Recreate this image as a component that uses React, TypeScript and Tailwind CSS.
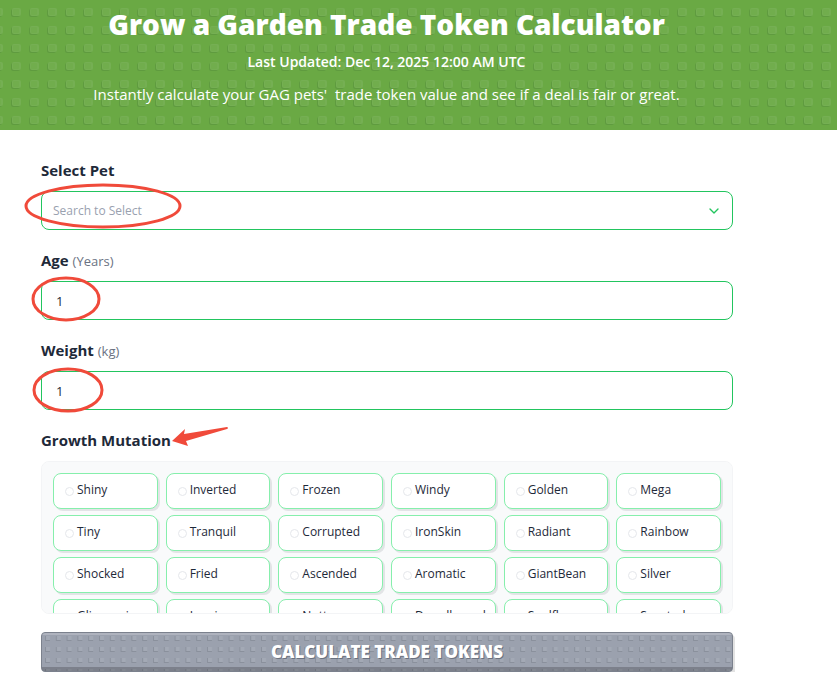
import { ChevronDown } from "lucide-react";

const mutations = [
  "Shiny", "Inverted", "Frozen", "Windy", "Golden", "Mega",
  "Tiny", "Tranquil", "Corrupted", "IronSkin", "Radiant", "Rainbow",
  "Shocked", "Fried", "Ascended", "Aromatic", "GiantBean", "Silver",
  "Glimmering", "Luminous", "Nutty", "Dreadbound", "Soulflame", "Spectral",
];

function HeaderStuds() {
  return (
    <svg className="absolute inset-0 h-full w-full" aria-hidden="true">
      <defs>
        <pattern id="studs" width="18" height="18" patternUnits="userSpaceOnUse" x="-7" y="7">
          <rect x="0" y="2" width="9" height="8" rx="2" fill="#5f9b3f" />
          <rect x="1" y="1" width="9" height="8" rx="2" fill="#75af53" />
          <rect x="2" y="2" width="6" height="6" rx="1" fill="#71ad4d" />
        </pattern>
      </defs>
      <rect width="100%" height="100%" fill="url(#studs)" />
    </svg>
  );
}

function ButtonStuds() {
  return (
    <svg className="absolute inset-0 h-full w-full" aria-hidden="true">
      <defs>
        <pattern id="button-studs" width="10.8" height="11" patternUnits="userSpaceOnUse" x="2" y="2">
          <rect x="1" y="1" width="5" height="5" fill="#a3a9b5" />
          <path d="M1.5 1v4.5h4.5" fill="none" stroke="#8a909c" />
        </pattern>
      </defs>
      <rect width="100%" height="100%" fill="url(#button-studs)" />
    </svg>
  );
}

type NumberFieldProps = {
  id: string;
  label: string;
  unit: string;
};

function NumberField(props: NumberFieldProps) {
  return (
    <div>
      <label htmlFor={props.id} className="block h-6 text-[15px] leading-6 font-bold">
        {props.label} <span className="text-[13px] font-normal text-gray-500">({props.unit})</span>
      </label>
      <input
        id={props.id}
        type="text"
        inputMode="numeric"
        defaultValue="1"
        className="mt-[9px] block h-[39px] w-full rounded-lg border border-[#22c55e] bg-white px-3.5 text-[13px]"
      />
    </div>
  );
}

export default function App() {
  return (
    <div className="bg-white font-['Open_Sans',sans-serif] text-gray-800">
      <header className="relative h-[130px] bg-[#6aa944] pr-16 text-center text-white">
        <HeaderStuds />
        <div className="relative pt-1">
          <h1 className="text-[28px] leading-10 font-extrabold">Grow a Garden Trade Token Calculator</h1>
          <p className="mt-1 text-sm leading-7 font-semibold">Last Updated: Dec 12, 2025 12:00 AM UTC</p>
          <p className="mt-1 text-[15px] leading-7 font-medium">
            Instantly calculate your GAG pets'&nbsp; trade token value and see if a deal is fair or great.
          </p>
        </div>
      </header>

      <main className="relative mr-[104px] ml-[41px] pt-7">
        <div className="flex flex-col gap-[18px]">
          <div>
            <label htmlFor="pet" className="block h-6 text-[15px] leading-6 font-bold">Select Pet</label>
            <div className="relative mt-[9px]">
              <select
                id="pet"
                defaultValue=""
                className="block h-[39px] w-full appearance-none rounded-lg border border-[#22c55e] bg-white px-[11px] text-xs text-gray-400"
              >
                <option value="">Search to Select</option>
              </select>
              <ChevronDown className="pointer-events-none absolute top-3 right-[11px] size-4 text-[#22c55e]" />
            </div>
          </div>
          <NumberField id="age" label="Age" unit="Years" />
          <NumberField id="weight" label="Weight" unit="kg" />

          <fieldset>
            <legend className="text-[15px] leading-6 font-bold">Growth Mutation</legend>
            <div className="mt-[9px] h-[153px] overflow-y-auto rounded-lg border border-gray-100 bg-gray-50 p-[11px] [scrollbar-width:none]">
              <div className="grid grid-cols-6 gap-x-2 gap-y-[6px]">
                {mutations.map((name) => (
                  <label
                    key={name}
                    className="flex h-9 items-center gap-[3px] rounded-lg border border-[#86efac] bg-white pb-[2px] pl-[11px] text-xs font-medium shadow-[2px_2px_0_#e2e4e6]"
                  >
                    <input
                      type="radio"
                      name="mutation"
                      className="mt-[2px] size-[9px] shrink-0 appearance-none rounded-full border border-gray-200 bg-white"
                    />
                    <span>{name}</span>
                  </label>
                ))}
              </div>
            </div>
          </fieldset>
        </div>

        <button
          type="button"
          className="relative mt-[18px] block h-10 w-full overflow-hidden rounded border border-[#7b818d] bg-[#9ba1ae] text-[17px] font-extrabold text-white shadow-[2px_3px_0_#e2e2e2]"
        >
          <ButtonStuds />
          <span className="absolute inset-0 border-t-2 border-b-4 border-t-white/20 border-b-black/20" />
          <span className="relative text-shadow-[1px_1px_0_#6b7280]">CALCULATE TRADE TOKENS</span>
        </button>

        {/* hand-drawn hints */}
        <svg
          className="pointer-events-none absolute top-0 -left-[41px]"
          width="260"
          height="330"
          fill="none"
          stroke="#f04a3a"
          strokeWidth="3"
          aria-hidden="true"
        >
          <ellipse cx="103" cy="76" rx="77" ry="21" />
          <ellipse cx="66" cy="169" rx="33" ry="21" />
          <ellipse cx="68" cy="260" rx="34" ry="21" />
          <path d="M172 311L185 299L184 304L227 297Q229 298 227 299L186 311L188 316Z" fill="#f04a3a" stroke="none" />
        </svg>
      </main>
    </div>
  );
}
